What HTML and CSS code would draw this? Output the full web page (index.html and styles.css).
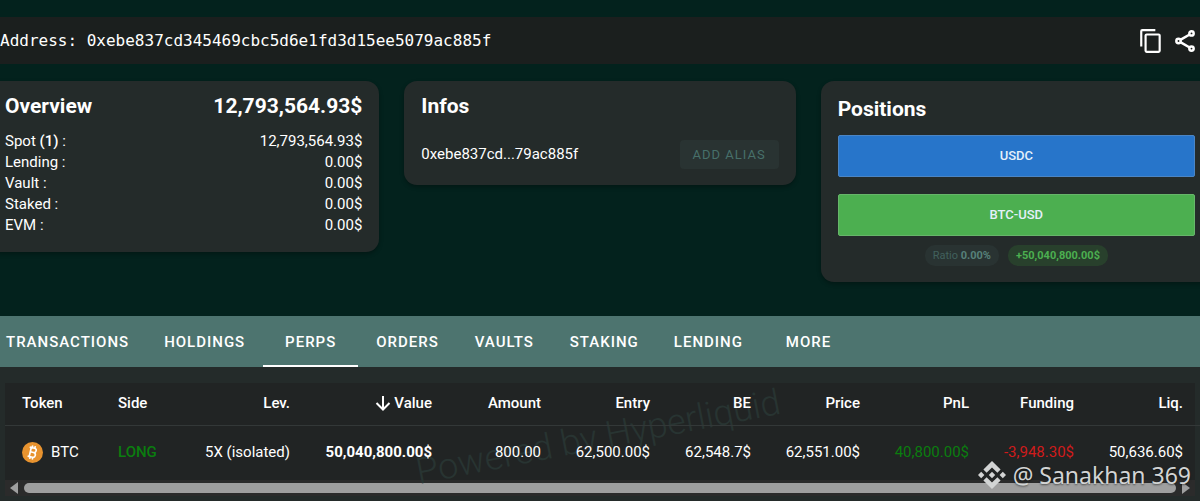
FILE: index.html
```html
<!DOCTYPE html>
<html lang="en">
<head>
  <meta charset="UTF-8">
  <meta name="viewport" content="width=device-width, initial-scale=1.0">
  <title>Address - 0xebe837cd...79ac885f</title>
  <link rel="stylesheet" href="styles.css">
</head>
<body>
  <header class="address-bar">
    <h1 class="address">Address: 0xebe837cd345469cbc5d6e1fd3d15ee5079ac885f</h1>
    <div class="address-actions">
      <button class="icon-btn" aria-label="Copy address">
        <svg width="26" height="26" viewBox="0 0 24 24" fill="currentColor"><path d="M16 1H4a2 2 0 0 0-2 2v14h2V3h12V1zm3 4H8a2 2 0 0 0-2 2v14a2 2 0 0 0 2 2h11a2 2 0 0 0 2-2V7a2 2 0 0 0-2-2zm0 16H8V7h11v14z"/></svg>
      </button>
      <button class="icon-btn" aria-label="Share">
        <svg width="26" height="26" viewBox="0 0 24 24" fill="none" stroke="currentColor" stroke-width="2.300"><circle cx="18" cy="5" r="2"/><circle cx="6" cy="12" r="2"/><circle cx="18" cy="19" r="2"/><path d="M7.700 11l8.600-5M7.700 13l8.600 5"/></svg>
      </button>
    </div>
  </header>

  <main>
    <div class="cards">
      <section class="card">
        <div class="card-head">
          <h2>Overview</h2>
          <h2>12,793,564.93$</h2>
        </div>
        <dl class="balances">
          <div><dt>Spot <b>(1)</b> :</dt><dd>12,793,564.93$</dd></div>
          <div><dt>Lending :</dt><dd>0.00$</dd></div>
          <div><dt>Vault :</dt><dd>0.00$</dd></div>
          <div><dt>Staked :</dt><dd>0.00$</dd></div>
          <div><dt>EVM :</dt><dd>0.00$</dd></div>
        </dl>
      </section>

      <section class="card">
        <div class="card-head">
          <h2>Infos</h2>
        </div>
        <div class="alias-row">
          <span>0xebe837cd...79ac885f</span>
          <button class="alias-btn">ADD ALIAS</button>
        </div>
      </section>

      <section class="card positions">
        <h2>Positions</h2>
        <button class="position usdc">USDC</button>
        <button class="position btc">BTC-USD</button>
        <div class="chips">
          <span class="chip">Ratio <b>0.00%</b></span>
          <span class="chip chip-green"><b>+50,040,800.00$</b></span>
        </div>
      </section>
    </div>

    <nav class="tabs">
      <a href="#transactions">TRANSACTIONS</a>
      <a href="#holdings">HOLDINGS</a>
      <a href="#perps" class="active">PERPS</a>
      <a href="#orders">ORDERS</a>
      <a href="#vaults">VAULTS</a>
      <a href="#staking">STAKING</a>
      <a href="#lending">LENDING</a>
      <a href="#more">MORE</a>
    </nav>

    <section class="panel">
      <div class="table-wrap">
        <div class="powered">Powered by Hyperliquid</div>
        <table>
          <colgroup>
            <col class="c-token"><col class="c-side"><col class="c-lev"><col class="c-value">
            <col class="c-num"><col class="c-num"><col class="c-be"><col class="c-num">
            <col class="c-num"><col class="c-fund"><col class="c-num">
          </colgroup>
          <thead>
            <tr>
              <th class="left">Token</th>
              <th class="left">Side</th>
              <th>Lev.</th>
              <th><svg class="sort" width="18" height="18" viewBox="0 0 18 18" fill="none" stroke="currentColor" stroke-width="2"><path d="M9 2v13M2.500 9L9 15.500 15.500 9"/></svg>Value</th>
              <th>Amount</th>
              <th>Entry</th>
              <th>BE</th>
              <th>Price</th>
              <th>PnL</th>
              <th>Funding</th>
              <th>Liq.</th>
            </tr>
          </thead>
          <tbody>
            <tr>
              <td class="left">
                <span class="token">
                  <svg width="21" height="21" viewBox="0 0 32 32"><circle cx="16" cy="16" r="16" fill="#e8932f"/><g transform="rotate(13 16 16)" fill="none" stroke="#fff" stroke-width="2.500"><path d="M12.500 9v14M10 9h7.500a3.300 3.300 0 0 1 0 6.700h-5M17.500 15.700a3.600 3.600 0 0 1 0 7.300H10M14 5.500V9M18 5.500V9M14 23v3.500M18 23v3.500"/></g></svg>
                  BTC
                </span>
              </td>
              <td class="left long">LONG</td>
              <td>5X (isolated)</td>
              <td><b>50,040,800.00$</b></td>
              <td>800.00</td>
              <td>62,500.00$</td>
              <td>62,548.7$</td>
              <td>62,551.00$</td>
              <td class="gain">40,800.00$</td>
              <td class="loss">-3,948.30$</td>
              <td>50,636.60$</td>
            </tr>
          </tbody>
        </table>
      </div>
      <div class="scrollbar">
        <button aria-label="Scroll left"><svg width="8" height="12" viewBox="0 0 8 12" fill="currentColor"><path d="M8 0v12L0 6z"/></svg></button>
        <div class="thumb"></div>
        <button aria-label="Scroll right"><svg width="8" height="12" viewBox="0 0 8 12" fill="currentColor"><path d="M0 0v12l8-6z"/></svg></button>
      </div>
    </section>
  </main>

  <div class="credit">
    <svg width="28" height="28" viewBox="0 0 28 28" fill="currentColor"><path d="M14 0l8.600 8.600-3.200 3.200L14 6.400l-5.400 5.400-3.200-3.200zM14 28l-8.600-8.600 3.200-3.200 5.400 5.400 5.400-5.400 3.200 3.200zM14 10.800l3.200 3.200-3.200 3.200-3.200-3.200zM3.200 10.800L6.400 14l-3.200 3.200L0 14zM24.800 10.800L28 14l-3.200 3.200-3.200-3.200z"/></svg>
    <span>@ Sanakhan 369</span>
  </div>
</body>
</html>
```

FILE: styles.css
```css
* {
  box-sizing: border-box;
}
body {
  margin: 0;
  padding-top: 17px;
  min-height: 100vh;
  background-color: #03221d;
  color: #fff;
  font-family: Roboto, sans-serif;
  font-size: 15px;
  line-height: 21px;
  overflow: hidden;
  position: relative;
}
h1, h2 {
  margin: 0;
}
button {
  font-family: inherit;
  border: none;
  cursor: pointer;
}
svg {
  display: block;
}

.address-bar {
  display: flex;
  align-items: center;
  justify-content: space-between;
  height: 47px;
  background-color: #1b1f1e;
}
.address {
  font-family: "DejaVu Sans Mono", monospace;
  font-size: 16px;
  font-weight: normal;
}
.address-actions {
  display: flex;
  gap: 8px;
  padding-right: 2px;
}
.icon-btn {
  padding: 0;
  background: none;
  color: #fff;
}

/* the cards run a little past both sides of the window */
.cards {
  display: grid;
  grid-template-columns: repeat(3, 1fr);
  align-items: start;
  gap: 25px;
  margin: 17px -12px 34px;
}
.card {
  padding: 12px 17px 16px;
  border-radius: 13px;
  background-color: #242b2a;
  box-shadow: 0 2px 4px rgba(0, 0, 0, 0.3);
}
.card h2 {
  font-size: 21px;
  font-weight: 700;
  line-height: 27px;
}
.card-head {
  display: flex;
  justify-content: space-between;
  margin-bottom: 11px;
}
.balances {
  margin: 0;
}
.balances div {
  display: flex;
  justify-content: space-between;
}
.balances dd {
  margin: 0;
}
.balances b {
  font-weight: 500;
}
.alias-row {
  display: flex;
  align-items: center;
  justify-content: space-between;
  padding-top: 9px;
}
.alias-btn {
  height: 29px;
  padding: 0 13px;
  border-radius: 4px;
  background-color: #293332;
  color: #47706a;
  font-size: 13px;
  letter-spacing: 1px;
}
.positions {
  display: flex;
  flex-direction: column;
  padding-top: 15px;
}
.position {
  height: 42px;
  margin-bottom: 17px;
  padding-bottom: 3px;
  border: 1px solid #4b85c4;
  border-radius: 2px;
  background-color: #2775ca;
  color: #e4f0fa;
  font-size: 13px;
  font-weight: 500;
}
.usdc {
  margin-top: 12px;
}
.btc {
  margin-bottom: 9px;
  border-color: #67b56a;
  background-color: #4caf50;
}
.chips {
  display: flex;
  justify-content: center;
  gap: 9px;
}
.chip {
  padding: 0 8px;
  border-radius: 10px;
  background-color: #293332;
  color: #41615d;
  font-size: 11px;
}
.chip b {
  color: #568079;
}
.chip-green {
  background-color: #28402c;
}
.chip-green b {
  color: #4caf50;
}

.tabs {
  display: flex;
  gap: 1px;
  height: 51px;
  margin-left: -11px;
  background-color: #4d746f;
}
.tabs a {
  display: flex;
  align-items: center;
  justify-content: center;
  min-width: 95px;
  padding: 4px 17px 0;
  border-bottom: 2px solid transparent;
  color: #fff;
  font-weight: 500;
  letter-spacing: 1px;
  text-decoration: none;
}
.tabs .active {
  border-bottom-color: #fff;
}

.panel {
  padding: 16px 5px 5px;
  background-color: #242b2a;
}
.table-wrap {
  position: relative;
  background-color: #212424;
}
table {
  position: relative;
  width: 100%;
  table-layout: fixed;
  border-collapse: collapse;
}
.c-token { width: 96px; }
.c-side { width: 86px; }
.c-lev { width: 120px; }
.c-value { width: 142px; }
.c-num { width: 109px; }
.c-be { width: 101px; }
.c-fund { width: 105px; }
th, td {
  padding: 0 17px;
  text-align: right;
  white-space: nowrap;
}
th {
  height: 42px;
  border-bottom: 1px solid #333838;
  font-weight: 500;
}
td {
  height: 55px;
}
.left {
  text-align: left;
}
.sort {
  display: inline-block;
  margin-right: 2px;
  vertical-align: -4px;
}
.token {
  display: flex;
  align-items: center;
  gap: 8px;
}
.long {
  color: #0b7d0f;
  font-weight: 500;
}
.gain {
  color: #0b7d0f;
}
.loss {
  color: #d01b1b;
}
/* faint mark behind the rows */
.powered {
  position: absolute;
  top: 36px;
  left: 408px;
  color: #283432;
  font-size: 36px;
  font-weight: 300;
  line-height: 36px;
  white-space: nowrap;
  transform: rotate(-11deg);
}
.scrollbar {
  display: flex;
  align-items: center;
  gap: 6px;
  height: 16px;
  padding: 0 5px;
  background-color: #2b2b2b;
}
.scrollbar button {
  padding: 0;
  background: none;
  color: #9f9f9f;
}
.thumb {
  flex: 1;
  height: 10px;
  border-radius: 5px;
  background-color: #9f9f9f;
}

.credit {
  position: absolute;
  right: 9px;
  bottom: 10px;
  display: flex;
  align-items: center;
  gap: 7px;
  color: #d2d4d4;
  font-family: "Noto Sans", sans-serif;
  font-size: 23px;
  line-height: 32px;
  text-shadow: 0 1px 2px rgba(0, 0, 0, 0.5);
}
```
